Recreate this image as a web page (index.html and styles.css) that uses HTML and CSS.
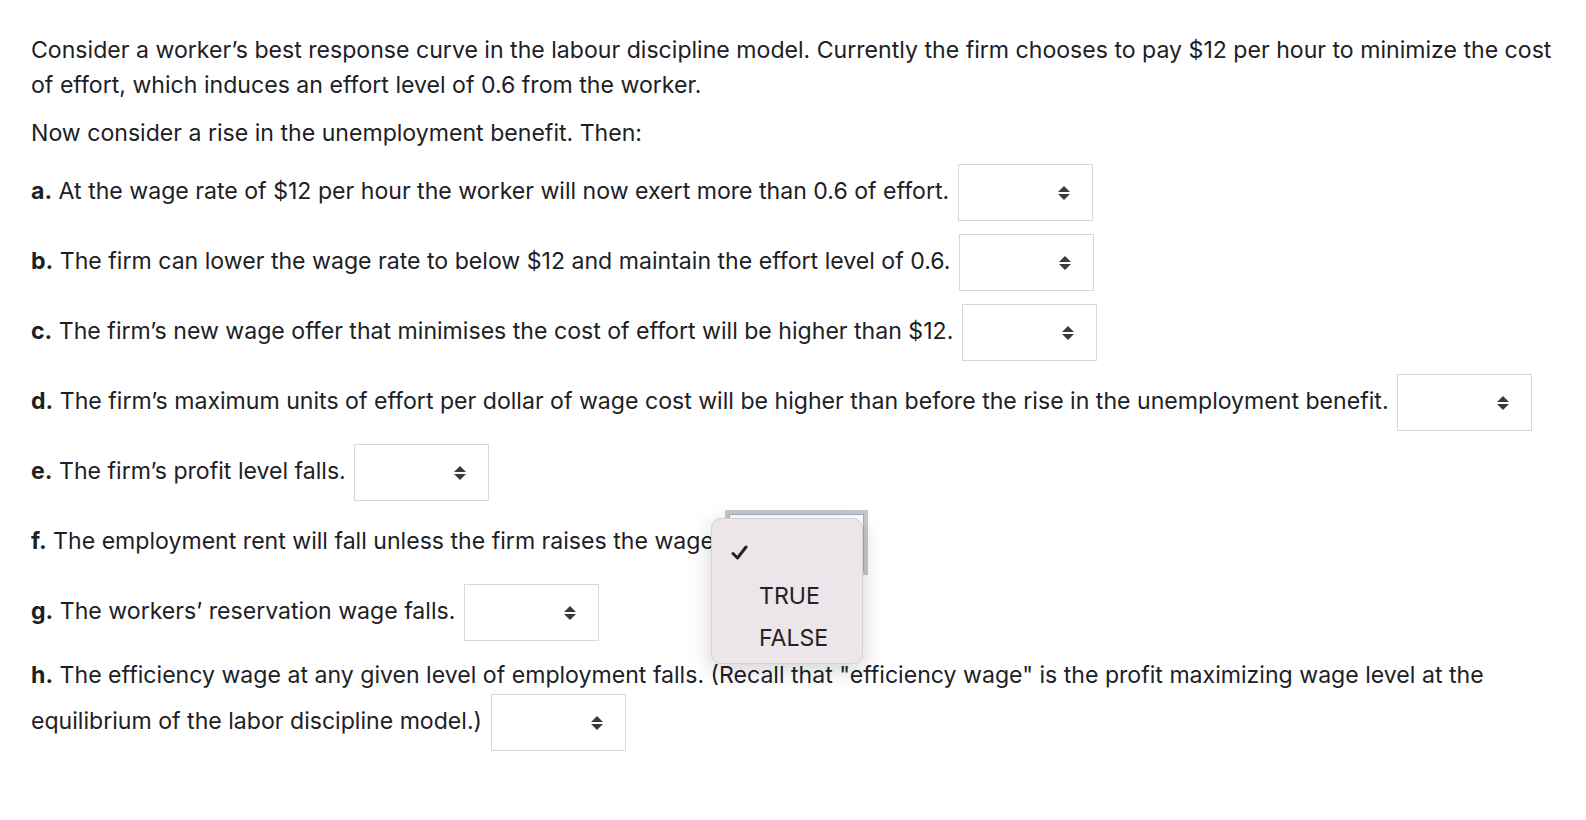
FILE: index.html
```html
<!DOCTYPE html>
<html lang="en">
<head>
  <meta charset="UTF-8" />
  <title>Labour discipline model</title>
  <link rel="stylesheet" href="styles.css">
</head>
<body>
  <div class="que">
    <p>Consider a worker’s best response curve in the labour discipline model. Currently the firm chooses to pay $12 per hour to minimize the cost of effort, which induces an effort level of 0.6 from the worker.</p>
    <p>Now consider a rise in the unemployment benefit. Then:</p>

    <div class="item"><b>a.</b> At the wage rate of $12 per hour the worker will now exert more than 0.6 of effort. <span class="select"><span class="arrows"></span></span></div>
    <div class="item"><b>b.</b> The firm can lower the wage rate to below $12 and maintain the effort level of 0.6. <span class="select"><span class="arrows"></span></span></div>
    <div class="item"><b>c.</b> The firm’s new wage offer that minimises the cost of effort will be higher than $12. <span class="select"><span class="arrows"></span></span></div>
    <div class="item"><b>d.</b> The firm’s maximum units of effort per dollar of wage cost will be higher than before the rise in the unemployment benefit. <span class="select"><span class="arrows"></span></span></div>
    <div class="item"><b>e.</b> The firm’s profit level falls. <span class="select"><span class="arrows"></span></span></div>
    <div class="item"><b>f.</b> The employment rent will fall unless the firm raises the wage. <span class="select focused"><span class="arrows"></span>
        <span class="menu">
          <span class="option checked">
            <svg class="check" width="17" height="15" viewBox="0 0 17 15"><path d="M2 8.5 L6.5 13 L15 2" fill="none" stroke="#232323" stroke-width="3" stroke-linecap="round" stroke-linejoin="round"/></svg>
          </span>
          <span class="option">TRUE</span>
          <span class="option">FALSE</span>
        </span>
      </span></div>
    <div class="item"><b>g.</b> The workers’ reservation wage falls. <span class="select"><span class="arrows"></span></span></div>
    <div class="item last"><b>h.</b> The efficiency wage at any given level of employment falls. (Recall that "efficiency wage" is the profit maximizing wage level at the equilibrium of the labor discipline model.) <span class="select"><span class="arrows"></span></span></div>
  </div>
</body>
</html>
```

FILE: styles.css
```css
body {
  margin: 0;
  padding: 0;
  background-color: #fff;
  font-family: Inter, "Liberation Sans", Arial, sans-serif;
  color: #1d2125;
}
.que {
  padding: 33px 31px;
  font-size: 23.1px;
  line-height: 35px;
}
.que p {
  margin: 0 0 13px;
}
.item {
  margin-bottom: 13px;
}
.item.last {
  margin-top: 16px;
  line-height: 37px;
}
.item b {
  font-weight: bold;
}
.select {
  position: relative;
  display: inline-block;
  box-sizing: border-box;
  width: 135px;
  height: 57px;
  margin-left: 2px;
  border: 1px solid #d6d9dc;
  background-color: #fff;
  vertical-align: middle;
}
.arrows {
  position: absolute;
  right: 22px;
  top: 21px;
  width: 12px;
  height: 14px;
}
.arrows::before,
.arrows::after {
  content: "";
  position: absolute;
  left: 0;
  border-left: 6px solid transparent;
  border-right: 6px solid transparent;
}
.arrows::before {
  top: 0;
  border-bottom: 6px solid #3a3a3a;
}
.arrows::after {
  bottom: 0;
  border-top: 6px solid #3a3a3a;
}
.select.focused {
  border-color: #9fb2c8;
  outline: 4px solid #c8c8c8;
}
.menu {
  position: absolute;
  left: -19px;
  top: 3px;
  width: 152px;
  height: 146px;
  box-sizing: border-box;
  padding-top: 14px;
  background-color: #ece5e9;
  border: 1px solid #d7d0d4;
  border-radius: 10px;
  box-shadow: 0 6px 22px rgba(0, 0, 0, 0.18);
  z-index: 2;
}
.option {
  display: block;
  height: 42px;
  line-height: 42px;
  padding-left: 47px;
  color: #232323;
}
.option.checked {
  position: relative;
}
.check {
  position: absolute;
  left: 19px;
  top: 12px;
}
```
